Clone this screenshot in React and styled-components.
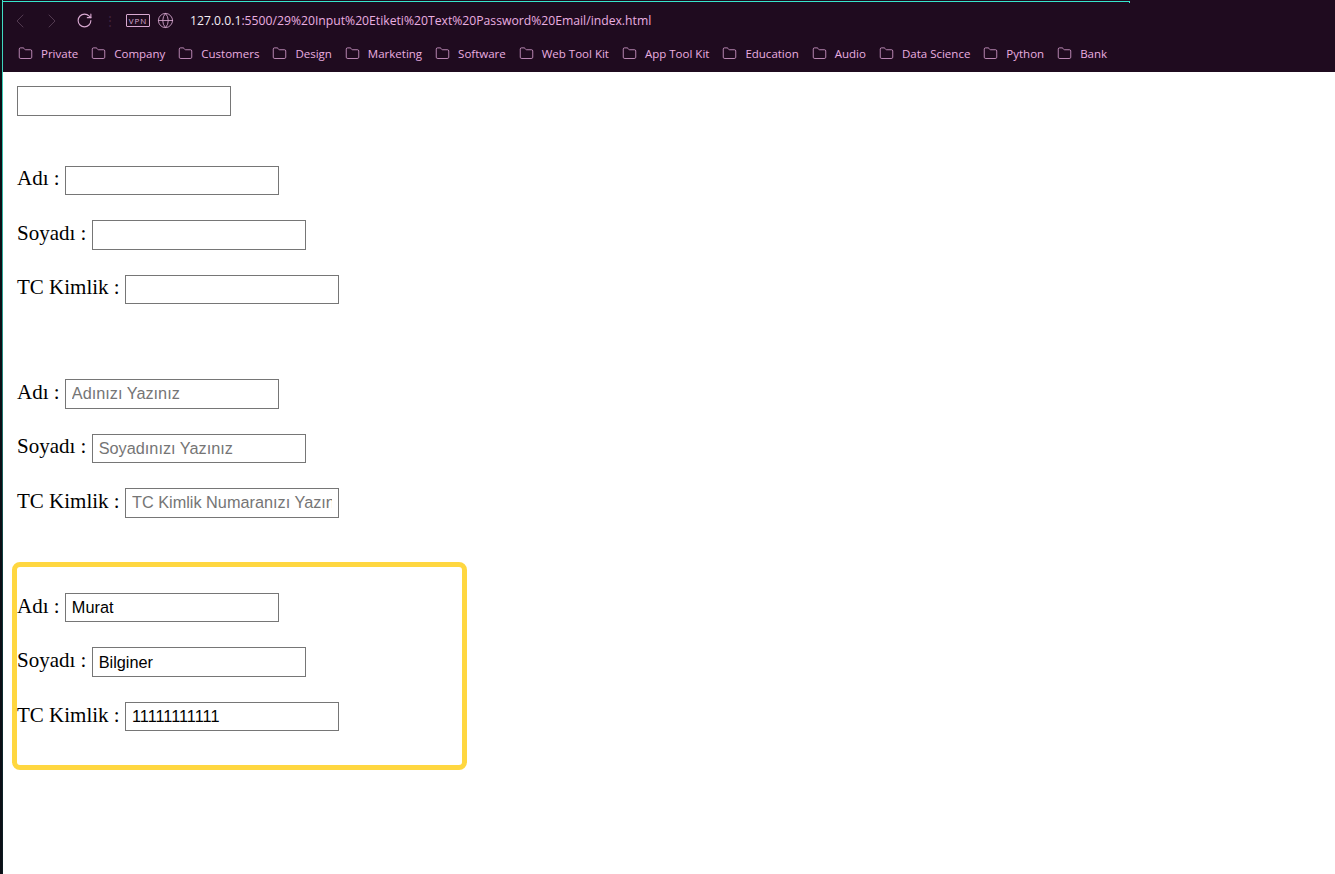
import React from "react";
import styled, { createGlobalStyle } from "styled-components";
import { ChevronLeft, ChevronRight, RotateCw, Globe, Folder } from "lucide-react";

const GlobalStyle = createGlobalStyle`
  html, body {
    margin: 0;
    padding: 0;
    background: #ffffff;
  }
`;

const Page = styled.div`
  width: 1335px;
  height: 874px;
  overflow: hidden;
  box-sizing: border-box;
  padding-left: 2px;
  background: #0c0f16;
`;

const Frame = styled.div`
  height: 100%;
  display: flex;
  flex-direction: column;
  box-sizing: border-box;
  padding-left: 1px;
  background: linear-gradient(#43e0c8 0%, #2a9c90 35%, #0e3a3c 65%, #0c1a20 100%);
`;

const Browser = styled.div`
  height: 72px;
  flex-shrink: 0;
  background: #1f0b1f;
  display: flex;
  flex-direction: column;
  color: #eaaee0;
  font-family: "Open Sans", "Noto Sans", sans-serif;
`;

const TopLine = styled.div`
  position: relative;
  height: 1px;
  margin-top: 1px;
  width: 1126px;
  background: #35e6cc;
  &::after {
    content: "";
    position: absolute;
    top: 0;
    right: -1px;
    width: 1px;
    height: 2px;
    background: #35e6cc;
  }
`;

const AddressRow = styled.div`
  height: 37px;
  display: flex;
  align-items: center;
  padding-left: 5px;
`;

const NavButton = styled.span`
  display: flex;
  justify-content: center;
  width: 24px;
  margin-right: 8px;
  color: ${(p) => (p.$active ? "#d8a8d0" : "#523a50")};
`;

const Dots = styled.span`
  width: 22px;
  color: #43233f;
  font-size: 12px;
`;

const VpnBadge = styled.span`
  box-sizing: border-box;
  width: 24px;
  height: 13px;
  border: 1px solid #d8a8d0;
  border-radius: 1px;
  font-size: 8px;
  letter-spacing: 1px;
  line-height: 11px;
  text-align: center;
  color: #d8a8d0;
  margin-right: 7px;
`;

const Url = styled.div`
  margin-left: 16px;
  font-size: 12.2px;
  color: #eaaee0;
  b {
    font-weight: 400;
    color: #f4eef4;
  }
`;

const BookmarkRow = styled.div`
  display: flex;
  align-items: center;
  height: 28px;
  padding-left: 15px;
  gap: 13px;
`;

const Bookmark = styled.span`
  display: flex;
  align-items: center;
  gap: 8px;
  font-size: 11.5px;
  color: #eaaee0;
`;

const Content = styled.div`
  flex: 1;
  padding: 14px 14px 0;
  background: #ffffff;
  font-family: "Liberation Serif", serif;
  font-size: 21px;
  color: #000000;
`;

const Box = styled.input`
  box-sizing: border-box;
  width: 214px;
  height: 29.5px;
  padding: 1px 6px;
  border: 1px solid #767676;
  border-radius: 0;
  font-family: "Liberation Sans", Arial, sans-serif;
  font-size: 16.3px;
  color: #000000;
  background: #ffffff;
  &::placeholder {
    color: #757575;
    opacity: 1;
  }
`;

const Row = styled.div`
  height: 29.5px;
  margin-bottom: 25px;
  display: flex;
  align-items: center;
  white-space: pre;
`;

const Label = styled.span`
  padding-bottom: 3px;
`;

const Section = styled.section`
  margin-top: ${(p) => p.$top}px;
`;

const Highlight = styled.div`
  width: 455px;
  height: 208px;
  box-sizing: border-box;
  margin: 44.3px 0 0 -5px;
  padding-top: 25.8px;
  border: 5px solid #ffd740;
  border-radius: 8px;
`;

const bookmarks = [
  "Private", "Company", "Customers", "Design", "Marketing", "Software",
  "Web Tool Kit", "App Tool Kit", "Education", "Audio", "Data Science", "Python", "Bank",
];

const Fields = ({ values = [], placeholders = [] }) => (
  <>
    {["Adı : ", "Soyadı : ", "TC Kimlik : "].map((label, i) => (
      <Row key={label}>
        <Label>{label}</Label>
        <Box type="text" defaultValue={values[i]} placeholder={placeholders[i]} />
      </Row>
    ))}
  </>
);

const App = () => {
  return (
    <Page>
      <GlobalStyle />
      <Frame>
        <Browser>
          <TopLine />
          <AddressRow>
            <NavButton><ChevronLeft size={24} strokeWidth={1} /></NavButton>
            <NavButton><ChevronRight size={24} strokeWidth={1} /></NavButton>
            <NavButton $active><RotateCw size={17} strokeWidth={1.6} /></NavButton>
            <Dots>⋮</Dots>
            <VpnBadge>VPN</VpnBadge>
            <Globe size={17} strokeWidth={1.2} color="#d8a8d0" />
            <Url><b>127.0.0.1</b>:5500/29%20Input%20Etiketi%20Text%20Password%20Email/index.html</Url>
          </AddressRow>
          <BookmarkRow>
            {bookmarks.map((name) => (
              <Bookmark key={name}>
                <Folder size={15} strokeWidth={1.2} />
                {name}
              </Bookmark>
            ))}
          </BookmarkRow>
        </Browser>
        <Content>
          <Box type="text" />
          <Section $top={50}>
            <Fields />
          </Section>
          <Section $top={75.2}>
            <Fields placeholders={["Adınızı Yazınız", "Soyadınızı Yazınız", "TC Kimlik Numaranızı Yazınız"]} />
          </Section>
          <Highlight>
            <Fields values={["Murat", "Bilginer", "11111111111"]} />
          </Highlight>
        </Content>
      </Frame>
    </Page>
  );
};

export default App;
